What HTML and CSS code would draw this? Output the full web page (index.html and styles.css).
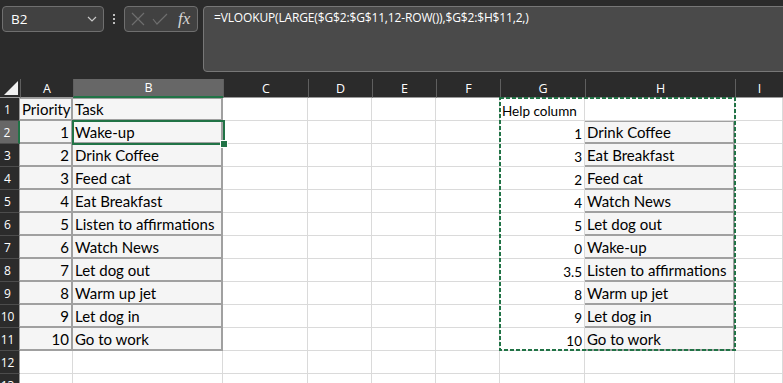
FILE: index.html
```html
<!DOCTYPE html>
<html lang="en">
<head>
    <meta charset="UTF-8">
    <title>Priority list</title>
    <link rel="stylesheet" href="styles.css">
</head>
<body>
    <div class="bar">
        <div class="namebox">
            <span>B2</span>
            <svg width="10" height="6" viewBox="0 0 10 6"><polyline points="1,1 5,5 9,1" fill="none" stroke="#c8c8c8" stroke-width="1.2"/></svg>
        </div>
        <div class="dots"><i></i><i></i><i></i></div>
        <div class="fxbox">
            <svg width="14" height="14" viewBox="0 0 14 14"><path d="M1 1 L13 13 M13 1 L1 13" stroke="#6e6e6e" stroke-width="1.2"/></svg>
            <svg width="16" height="12" viewBox="0 0 16 12"><polyline points="1,6 5,11 15,1" fill="none" stroke="#6e6e6e" stroke-width="1.2"/></svg>
            <span class="fx">fx</span>
        </div>
        <div class="formula">=VLOOKUP(LARGE($G$2:$G$11,12-ROW()),$G$2:$H$11,2,)</div>
    </div>

    <div class="sheet">
        <div class="grid" id="grid"></div>
        <svg class="copy-range" width="238" height="255"><rect x="1" y="1" width="235" height="252" fill="none" stroke="#217346" stroke-width="2" stroke-dasharray="4 2"/></svg>
        <div class="selection"><i></i></div>
    </div>

    <script>
        const cols = ['A', 'B', 'C', 'D', 'E', 'F', 'G', 'H', 'I'];
        const data = {
            A: ['Priority', 1, 2, 3, 4, 5, 6, 7, 8, 9, 10],
            B: ['Task', 'Wake-up', 'Drink Coffee', 'Feed cat', 'Eat Breakfast', 'Listen to affirmations', 'Watch News', 'Let dog out', 'Warm up jet', 'Let dog in', 'Go to work'],
            G: ['Help column', 1, 3, 2, 4, 5, 0, 3.5, 8, 9, 10],
            H: ['', 'Drink Coffee', 'Eat Breakfast', 'Feed cat', 'Watch News', 'Let dog out', 'Wake-up', 'Listen to affirmations', 'Warm up jet', 'Let dog in', 'Go to work']
        };
        const grid = document.getElementById('grid');

        // boxed ranges: A1:B11 and H2:H11
        function boxed(c, r) {
            if ((c === 'A' || c === 'B') && r >= 1 && r <= 11) return true;
            return c === 'H' && r >= 2 && r <= 11;
        }

        function add(cls, text) {
            const d = document.createElement('div');
            d.className = cls;
            d.textContent = text === undefined ? '' : text;
            grid.appendChild(d);
        }

        add('corner');
        cols.forEach(c => add('colhead' + (c === 'B' ? ' active' : ''), c));

        for (let r = 1; r <= 13; r++) {
            add('rowhead' + (r === 2 ? ' active' : ''), r);
            cols.forEach(c => {
                const v = data[c] ? data[c][r - 1] : undefined;
                let cls = 'cell';
                if (typeof v === 'number') cls += ' num';
                if (c === 'G') cls += ' small';
                if (boxed(c, r)) {
                    cls += ' box';
                    if (!boxed(c, r - 1)) cls += ' top';
                }
                add(cls, v);
            });
        }
    </script>
</body>
</html>
```

FILE: styles.css
```css
body {
    margin: 0;
    width: 783px;
    height: 383px;
    overflow: hidden;
    background: #2b2b2b;
    font-family: "Open Sans", sans-serif;
}

.bar {
    height: 79px;
    display: flex;
    align-items: flex-start;
    padding: 6px 0 0 2px;
    box-sizing: border-box;
    color: #fff;
}

.namebox {
    width: 102px;
    height: 26px;
    box-sizing: border-box;
    border: 1px solid #6f6f6f;
    border-radius: 4px;
    background: #414141;
    display: flex;
    align-items: center;
    justify-content: space-between;
    padding: 0 6px 0 8px;
    font-size: 13.5px;
}

.dots {
    width: 20px;
    height: 26px;
    display: flex;
    flex-direction: column;
    align-items: center;
    justify-content: center;
    gap: 2px;
}

.dots i {
    width: 2px;
    height: 2px;
    background: #bdbdbd;
}

.fxbox {
    width: 74px;
    height: 26px;
    box-sizing: border-box;
    border: 1px solid #6f6f6f;
    border-radius: 4px;
    background: #414141;
    display: flex;
    align-items: center;
    padding: 0 0 0 6px;
    gap: 7px;
}

.fx {
    font-family: "Liberation Serif", serif;
    font-style: italic;
    font-size: 17px;
    color: #d6d6d6;
    margin-left: 3px;
}

.formula {
    flex: 1;
    margin-left: 5px;
    margin-right: -6px;
    height: 66px;
    box-sizing: border-box;
    border: 1px solid #777;
    border-radius: 4px;
    background: #4a4a4a;
    padding: 2px 10px;
    font-size: 12px;
    letter-spacing: -0.15px;
}

.sheet {
    position: relative;
    background: #fff;
}

.grid {
    display: grid;
    grid-template-columns: 20px 53px 150px 85px 64px 64px 64px 85px 150px 48px;
    grid-template-rows: 19px repeat(13, 23px);
    font-family: "Lato", sans-serif;
    font-size: 15px;
    color: #000;
}

.corner {
    background: #2b2b2b;
    position: relative;
    border-bottom: 1px solid #9a9a9a;
}

.corner::after {
    content: "";
    position: absolute;
    right: 2px;
    bottom: 2px;
    border-left: 14px solid transparent;
    border-bottom: 14px solid #f0f0f0;
}

.colhead {
    background: #2b2b2b;
    color: #fff;
    font-family: "Open Sans", sans-serif;
    font-size: 12.5px;
    display: flex;
    align-items: center;
    justify-content: center;
    border-left: 1px solid #5f5f5f;
    border-bottom: 1px solid #9a9a9a;
}

.colhead.active {
    background: #676767;
    border-bottom: 2px solid #217346;
}

.rowhead {
    background: #2b2b2b;
    color: #fff;
    font-family: "Open Sans", sans-serif;
    font-size: 12px;
    display: flex;
    align-items: flex-end;
    justify-content: center;
    padding-right: 4px;
    border-bottom: 1px solid #4c4c4c;
    border-right: 1px solid #9a9a9a;
    line-height: 20px;
}

.rowhead.active {
    background: #676767;
    border-right: 2px solid #217346;
}

.cell {
    border-right: 1px solid #dadada;
    border-bottom: 1px solid #dadada;
    padding: 0 2px;
    display: flex;
    align-items: flex-end;
    line-height: 19px;
    white-space: nowrap;
    overflow: visible;
}

.cell.num {
    justify-content: flex-end;
}

.cell.small {
    font-size: 13.5px;
    line-height: 18px;
}

.cell.box {
    background: #f5f5f5;
    border-right: 2px solid #a0a0a0;
    border-bottom: 2px solid #a0a0a0;
}

.cell.box.top {
    box-shadow: inset 0 1px 0 #a0a0a0;
}

.copy-range {
    position: absolute;
    left: 499px;
    top: 18px;
}

.selection {
    position: absolute;
    left: 72px;
    top: 41px;
    width: 153px;
    height: 25px;
    box-sizing: border-box;
    border: 2px solid #217346;
}

.selection i {
    position: absolute;
    right: -5px;
    bottom: -5px;
    width: 6px;
    height: 6px;
    background: #217346;
    border: 1px solid #fff;
}
```
